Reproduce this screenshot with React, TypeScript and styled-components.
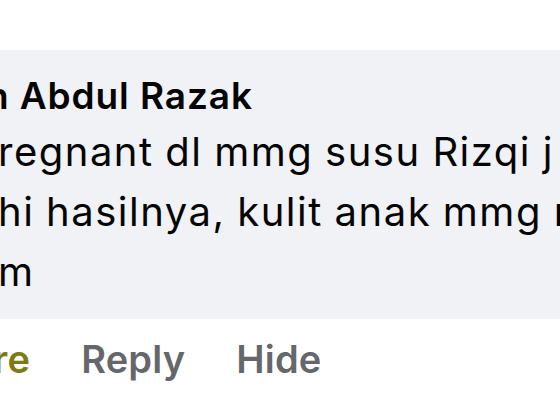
import React from "react";
import styled, { createGlobalStyle } from "styled-components";

const Global = createGlobalStyle`
  html, body { margin: 0; padding: 0; background: #ffffff; }
  body { font-family: Inter, "Noto Sans", "Liberation Sans", sans-serif; }
`;

const Frame = styled.div`
  width: 560px;
  height: 420px;
  overflow: hidden;
  background: #ffffff;
  display: flex;
  flex-direction: column;
`;

const Bubble = styled.div`
  margin-top: 50px;
  height: 269px;
  box-sizing: border-box;
  background: #f0f2f5;
  padding: 21px 0 0 0;
  display: flex;
  flex-direction: column;
  white-space: nowrap;
  overflow: hidden;
`;

const Name = styled.div`
  font-size: 37px;
  line-height: 50px;
  font-weight: 600;
  color: #050505;
  margin-left: -14px;
  letter-spacing: 0.9px;
`;

const Line = styled.div`
  font-size: 40px;
  line-height: 60px;
  font-weight: 400;
  color: #050505;
  margin-left: -2px;
  letter-spacing: 1.5px;
  word-spacing: -1px;
`;

const Body = styled.div`
  margin-top: 1px;
  display: flex;
  flex-direction: column;
`;

const Actions = styled.div`
  margin-top: 10px;
  display: flex;
  gap: 51px;
  margin-left: -7px;
  white-space: nowrap;
`;

const Action = styled.span<{ $active?: boolean }>`
  font-size: 38px;
  line-height: 60px;
  font-weight: 600;
  letter-spacing: 0.2px;
  color: ${(p) => (p.$active ? "#7d7b14" : "#65676b")};
`;

export default function App() {
  return (
    <>
      <Global />
      <Frame>
        <Bubble>
          <Name>n Abdul Razak</Name>
          <Body>
            <Line>regnant dl mmg susu Rizqi j</Line>
            <Line>hi hasilnya, kulit anak mmg r</Line>
            <Line>m</Line>
          </Body>
        </Bubble>
        <Actions>
          <Action $active>re</Action>
          <Action>Reply</Action>
          <Action>Hide</Action>
        </Actions>
      </Frame>
    </>
  );
}
